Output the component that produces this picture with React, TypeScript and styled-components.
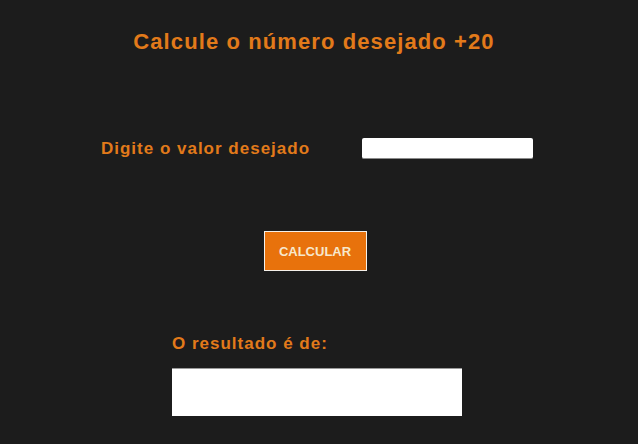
import React from 'react';
import styled, { createGlobalStyle } from 'styled-components';

const GlobalStyle = createGlobalStyle`
  html, body {
    margin: 0;
    padding: 0;
    background-color: #1c1c1c;
  }
  body {
    font-family: "Liberation Sans", Arial, sans-serif;
  }
`;

const Page = styled.main`
  width: 638px;
  height: 444px;
  display: flex;
  flex-direction: column;
  align-items: center;
  padding-right: 4px;
  box-sizing: border-box;
  overflow: hidden;
`;

const Title = styled.h1`
  margin: 30px 6px 0 0;
  font-size: 22px;
  line-height: 24px;
  font-weight: bold;
  letter-spacing: 1.1px;
  color: #e27a1a;
`;

const InputRow = styled.div`
  display: flex;
  align-items: center;
  gap: 52px;
  margin-top: 84px;
`;

const Label = styled.label`
  font-size: 17px;
  line-height: 20px;
  font-weight: bold;
  letter-spacing: 1px;
  color: #e27a1a;
`;

const ValueInput = styled.input`
  width: 171px;
  height: 21px;
  box-sizing: border-box;
  border: none;
  border-bottom: 1px solid #8a8a8a;
  border-radius: 2px;
  background: #ffffff;
  padding: 0 4px;
  font-family: inherit;
`;

const CalcButton = styled.button`
  margin: 72px 4px 0 0;
  width: 103px;
  height: 40px;
  box-sizing: border-box;
  background-color: #e8720c;
  border: 1px solid #f4f0ea;
  color: #f7e8cc;
  font-family: inherit;
  font-size: 13px;
  font-weight: bold;
  cursor: pointer;
`;

const ResultSection = styled.section`
  display: flex;
  flex-direction: column;
  margin-top: 63px;
  width: 290px;
`;

const ResultBox = styled.div`
  margin-top: 14px;
  height: 48px;
  box-sizing: border-box;
  background: #ffffff;
  border-top: 1px solid #9a9a9a;
`;

const App: React.FC = () => {
  return (
    <>
      <GlobalStyle />
      <Page>
        <Title>Calcule o número desejado +20</Title>
        <InputRow>
          <Label htmlFor="valor">Digite o valor desejado</Label>
          <ValueInput id="valor" type="text" />
        </InputRow>
        <CalcButton>CALCULAR</CalcButton>
        <ResultSection>
          <Label>O resultado é de:</Label>
          <ResultBox />
        </ResultSection>
      </Page>
    </>
  );
};

export default App;
